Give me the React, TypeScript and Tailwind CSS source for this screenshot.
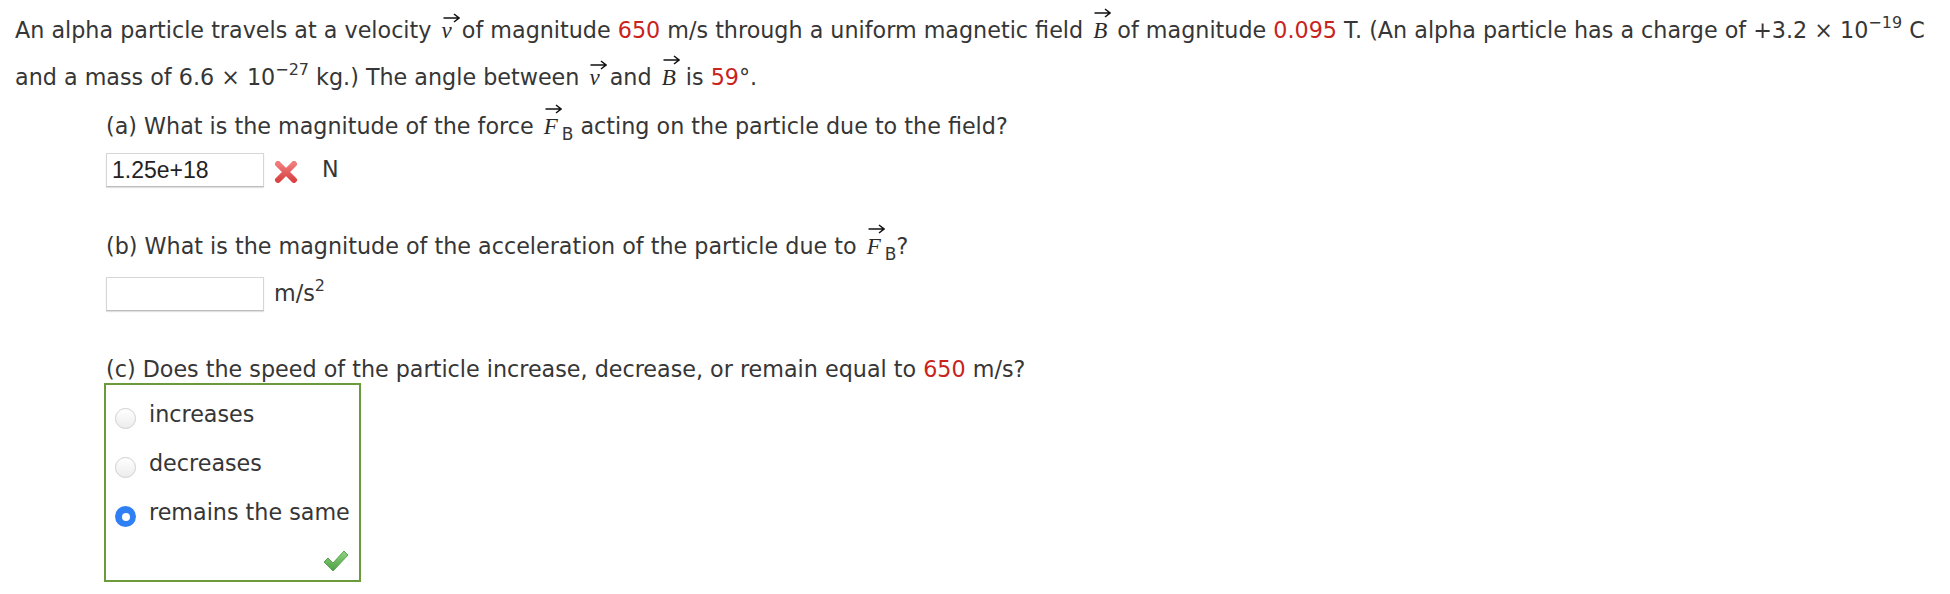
import React from 'react';

const RED = 'text-[#c8231d]';

// italic serif letter with a vector arrow drawn over it
const Vec: React.FC<{ letter: string; low?: boolean }> = ({ letter, low }) => (
    <span className="relative inline-block leading-none font-['Liberation_Serif',serif] italic text-[23px] text-[#2a2a2a] px-[3px]">
        {letter}
        <svg
            className={low ? 'absolute left-[4px] -top-[6px]' : 'absolute left-[4px] -top-[11px]'}
            width="17"
            height="10"
            viewBox="0 0 17 10"
        >
            <path d="M0.5 5 H15.5 M11 1 L16 5 L11 9" fill="none" stroke="#111" strokeWidth="1.5" />
        </svg>
    </span>
);

const Sup: React.FC<{ children: React.ReactNode }> = ({ children }) => (
    <span className="relative -top-[10px] text-[16px]">{children}</span>
);

const Sub: React.FC<{ children: React.ReactNode }> = ({ children }) => (
    <span className="relative top-[6px] text-[17px] ml-[1px]">{children}</span>
);

const RedX = () => (
    <svg width="24" height="22" viewBox="0 0 24 22">
        <defs>
            <linearGradient id="rx" x1="0" y1="0" x2="0" y2="1">
                <stop offset="0" stopColor="#f07a7a" />
                <stop offset="1" stopColor="#d94343" />
            </linearGradient>
        </defs>
        <path d="M4 3 L20 19 M20 3 L4 19" stroke="url(#rx)" strokeWidth="6" strokeLinecap="round" />
    </svg>
);

const Check = () => (
    <svg width="27" height="24" viewBox="0 0 27 24">
        <defs>
            <linearGradient id="ck" x1="0" y1="0" x2="0" y2="1">
                <stop offset="0" stopColor="#8fd47f" />
                <stop offset="1" stopColor="#4e9e45" />
            </linearGradient>
        </defs>
        <path d="M2 13 L6 9 L11 14 L22 2 L26 6 L11 22 Z" fill="url(#ck)" stroke="#5aa650" strokeWidth="1" strokeLinejoin="round" />
    </svg>
);

const Radio: React.FC<{ checked?: boolean }> = ({ checked }) =>
    checked ? (
        <span className="w-[21px] h-[21px] rounded-full bg-[#2f7ff5] flex items-center justify-center shrink-0 translate-y-[4px]">
            <span className="w-[8px] h-[8px] rounded-full bg-white" />
        </span>
    ) : (
        <span className="w-[21px] h-[21px] rounded-full border border-[#cfcfcf] bg-gradient-to-b from-white to-[#ececec] shrink-0 translate-y-[4px]" />
    );

const Field: React.FC<{ value?: string }> = ({ value }) => (
    <div className="w-[158px] h-[34px] border border-[#d6d6d6] border-b-[#bdbdbd] bg-white shadow-[0_1px_1px_rgba(0,0,0,0.12)] px-[5px] flex items-center font-['Liberation_Sans',sans-serif] text-[23px] text-[#222]">
        {value}
    </div>
);

const options = [
    { label: 'increases', checked: false },
    { label: 'decreases', checked: false },
    { label: 'remains the same', checked: true },
];

export default function App() {
    return (
        <div className="w-[1950px] h-[594px] bg-white font-['DejaVu_Sans',sans-serif] text-[22.25px] text-[#363636]">
            {/* Problem statement */}
            <div className="pl-[15px] pt-[8px] leading-[44px] whitespace-nowrap">
                <div>
                    An alpha particle travels at a velocity <Vec letter="v" low />{' '}of magnitude <span className={RED}>650</span> m/s
                    through a uniform magnetic field <Vec letter="B" /> of magnitude <span className={RED}>0.095</span> T. (An alpha
                    particle has a charge of +3.2 × 10<Sup>−19</Sup> C
                </div>
                <div>
                    and a mass of 6.6 × 10<Sup>−27</Sup> kg.) The angle between <Vec letter="v" low /> and <Vec letter="B" /> is{' '}
                    <span className={RED}>59</span>°.
                </div>
            </div>

            <div className="pl-[106px]">
                {/* (a) */}
                <div className="mt-[9px] leading-[30px] whitespace-nowrap">
                    (a) What is the magnitude of the force <Vec letter="F" />
                    <Sub>B</Sub> acting on the particle due to the field?
                </div>
                <div className="mt-[10px] flex items-center">
                    <Field value="1.25e+18" />
                    <span className="ml-[10px] mt-[4px]">
                        <RedX />
                    </span>
                    <span className="ml-[24px]">N</span>
                </div>

                {/* (b) */}
                <div className="mt-[44px] leading-[30px] whitespace-nowrap">
                    (b) What is the magnitude of the acceleration of the particle due to <Vec letter="F" />
                    <Sub>B</Sub>?
                </div>
                <div className="mt-[14px] flex items-center">
                    <Field />
                    <span className="ml-[10px]">
                        m/s<Sup>2</Sup>
                    </span>
                </div>

                {/* (c) */}
                <div className="mt-[44px] leading-[28px] whitespace-nowrap">
                    (c) Does the speed of the particle increase, decrease, or remain equal to{' '}
                    <span className={RED}>650</span> m/s?
                </div>
                <div className="-ml-[2px] w-[257px] h-[199px] border-2 border-[#6b9a3b] pt-[5px] flex flex-col">
                    {options.map((o) => (
                        <label key={o.label} className="h-[49px] flex items-center pl-[9px] gap-[13px]">
                            <Radio checked={o.checked} />
                            <span>{o.label}</span>
                        </label>
                    ))}
                    <div className="mt-auto flex justify-end pr-[10px] pb-[7px]">
                        <Check />
                    </div>
                </div>
            </div>
        </div>
    );
}
